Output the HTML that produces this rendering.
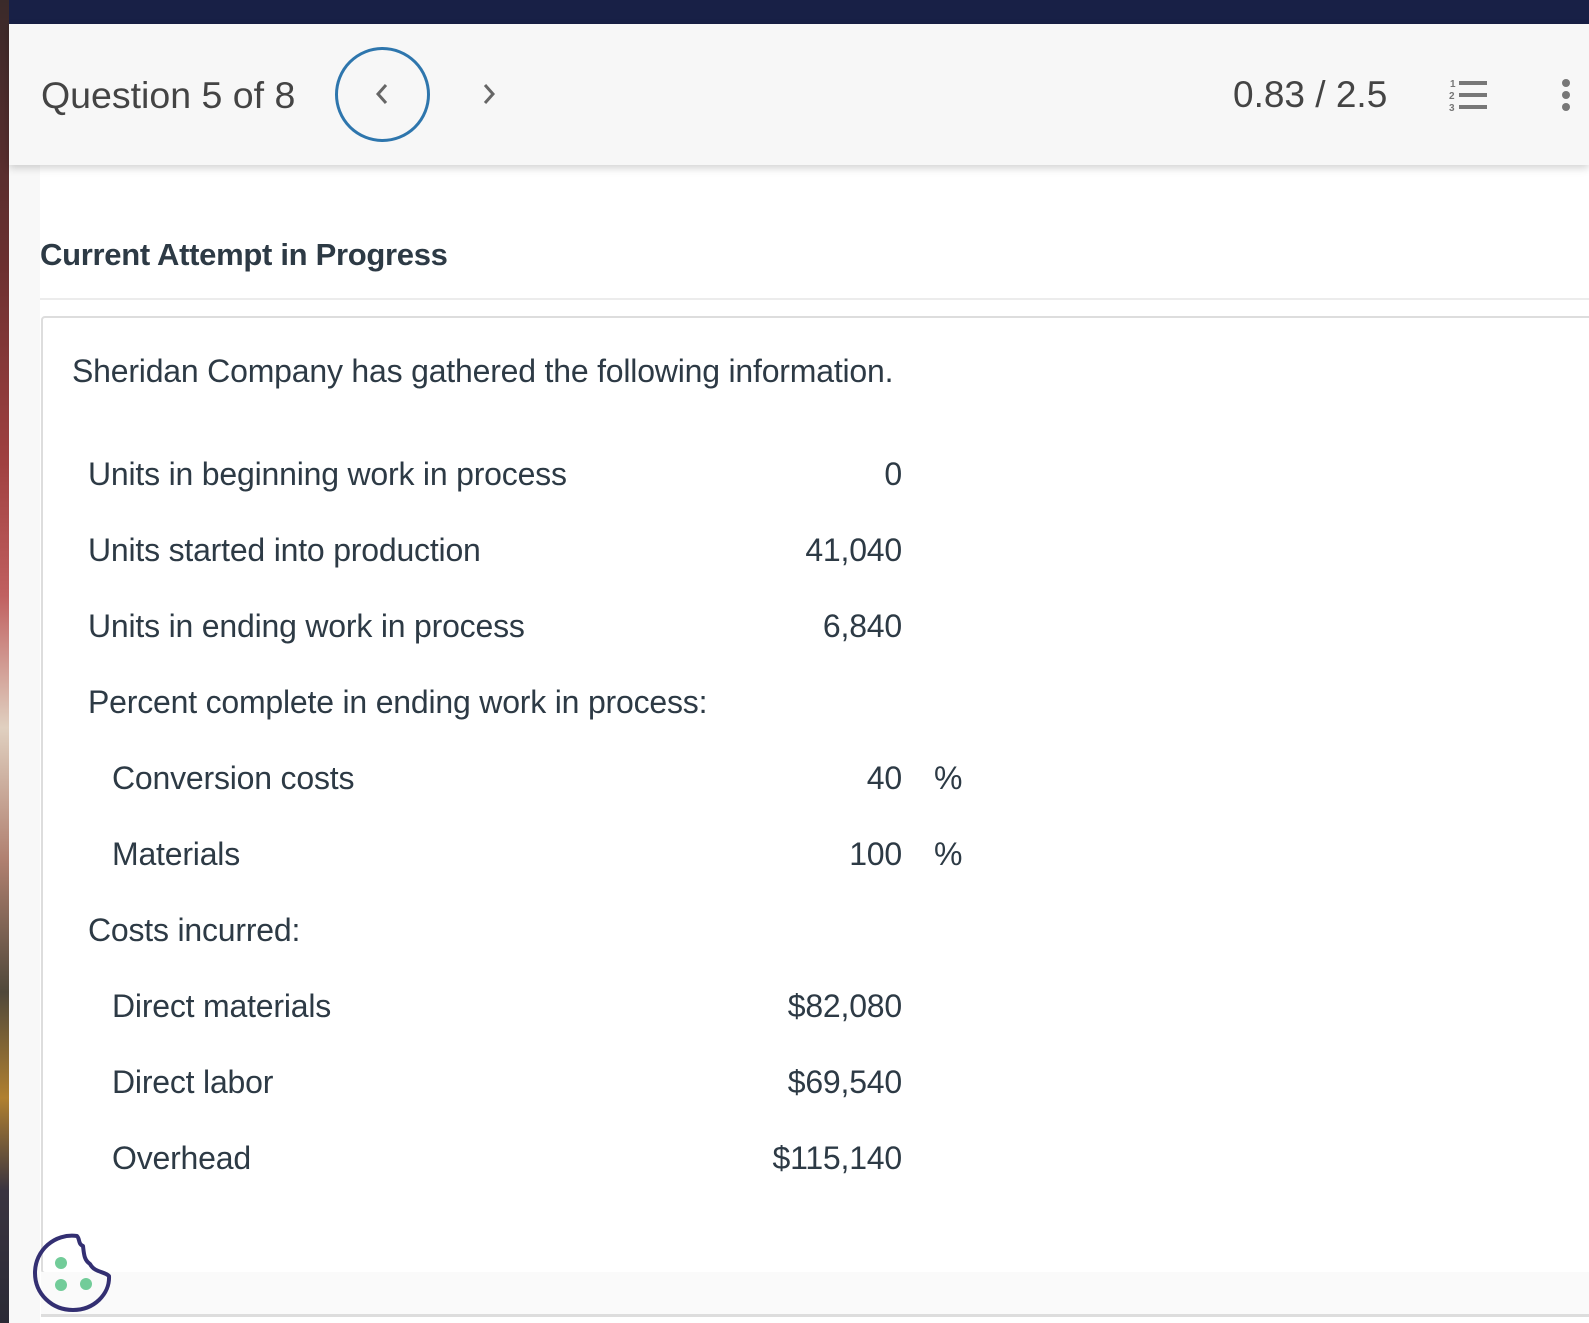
<!DOCTYPE html>
<html><head><meta charset="utf-8"><style>
html,body{margin:0;padding:0}
body{width:1589px;height:1323px;position:relative;overflow:hidden;background:#f8f8f8;font-family:"Liberation Sans",sans-serif;color:#2d3a45}
.strip{position:absolute;left:0;top:0;width:9px;height:1323px;background:linear-gradient(#3a2a2a 0%,#6b3030 20%,#a04040 35%,#c06060 45%,#e0d0c0 55%,#b08070 65%,#50483a 75%,#b08030 83%,#3a3440 90%,#2a2a35 100%)}
.top{position:absolute;left:9px;top:0;right:0;height:24px;background:#182046}
.hdr{position:absolute;left:9px;top:24px;right:0;height:141px;background:#f7f7f7;box-shadow:0 3px 8px rgba(0,0,0,.18);z-index:2}
.main{position:absolute;left:40px;top:165px;right:0;bottom:0;background:#fff}
.t{position:absolute;white-space:nowrap;font-size:32px;letter-spacing:-0.2px}
.r{text-align:right}
</style></head><body>
<div class="strip"></div>
<div class="top"></div>
<div class="hdr">
<div style="position:absolute;left:32px;top:50px;font-size:37.5px;color:#444">Question 5 of 8</div>
<div style="position:absolute;left:326px;top:23px;width:89px;height:89px;border:3px solid #2e76ad;border-radius:50%"></div>
<svg style="position:absolute;left:364px;top:58px" width="18" height="24"><path d="M13 3 L5 12 L13 21" stroke="#666" stroke-width="3" fill="none"/></svg>
<svg style="position:absolute;left:471px;top:58px" width="18" height="24"><path d="M5 3 L13 12 L5 21" stroke="#666" stroke-width="3" fill="none"/></svg>
<div style="position:absolute;left:1224px;top:50px;font-size:37px;color:#444">0.83 / 2.5</div>
<svg style="position:absolute;left:1440px;top:52px" width="50" height="40"><g fill="#777"><rect x="10" y="5" width="28" height="4"/><rect x="10" y="17" width="28" height="4"/><rect x="10" y="29" width="28" height="4"/></g><text x="1" y="11" font-size="10" fill="#777" font-family="Liberation Sans" font-weight="bold">1</text><text x="0" y="23" font-size="10" fill="#777" font-family="Liberation Sans" font-weight="bold">2</text><text x="0" y="35" font-size="10" fill="#777" font-family="Liberation Sans" font-weight="bold">3</text></svg>
<div style="position:absolute;left:1553px;top:55px"><div style="width:8px;height:8px;border-radius:50%;background:#777;margin-bottom:4px"></div><div style="width:8px;height:8px;border-radius:50%;background:#777;margin-bottom:4px"></div><div style="width:8px;height:8px;border-radius:50%;background:#777"></div></div>
</div>
<div class="main">
<div style="position:absolute;left:0;top:72px;font-size:31px;font-weight:bold;letter-spacing:-0.3px">Current Attempt in Progress</div>
<div style="position:absolute;left:0;right:0;top:133px;height:2px;background:#ececec"></div>
<div style="position:absolute;left:1px;right:-5px;top:151px;height:954px;border:2px solid #ddd;border-radius:4px;background:#fff"></div>
<div style="position:absolute;left:1px;right:0;top:1107px;height:42px;background:#fafafa;border-bottom:3px solid #ddd"></div>
</div>
<div class="t" style="left:72px;top:353px">Sheridan Company has gathered the following information.</div>
<div class="t" style="left:88px;top:456px">Units in beginning work in process</div>
<div class="t" style="left:88px;top:532px">Units started into production</div>
<div class="t" style="left:88px;top:608px">Units in ending work in process</div>
<div class="t" style="left:88px;top:684px">Percent complete in ending work in process:</div>
<div class="t" style="left:112px;top:760px">Conversion costs</div>
<div class="t" style="left:112px;top:836px">Materials</div>
<div class="t" style="left:88px;top:912px">Costs incurred:</div>
<div class="t" style="left:112px;top:988px">Direct materials</div>
<div class="t" style="left:112px;top:1064px">Direct labor</div>
<div class="t" style="left:112px;top:1140px">Overhead</div>
<div class="t r" style="right:687px;top:456px">0</div>
<div class="t r" style="right:687px;top:532px">41,040</div>
<div class="t r" style="right:687px;top:608px">6,840</div>
<div class="t r" style="right:687px;top:760px">40</div>
<div class="t r" style="right:687px;top:836px">100</div>
<div class="t" style="left:934px;top:760px">%</div>
<div class="t" style="left:934px;top:836px">%</div>
<div class="t r" style="right:687px;top:988px">$82,080</div>
<div class="t r" style="right:687px;top:1064px">$69,540</div>
<div class="t r" style="right:687px;top:1140px">$115,140</div>
<svg style="position:absolute;left:30px;top:1230px" width="86" height="86"><path d="M47 6 C25 3 5 20 5 43 C5 64 22 80 43 80 C64 80 80 64 79 46 C74 41 65 43 60 34 C54 30 54 24 53 16 C48 14 50 9 47 6 Z" fill="none" stroke="#332f72" stroke-width="4" stroke-linejoin="round"/><g fill="#72cc99"><circle cx="31" cy="33" r="6"/><circle cx="31" cy="55" r="6"/><circle cx="56" cy="54" r="6"/></g></svg>
</body></html>
